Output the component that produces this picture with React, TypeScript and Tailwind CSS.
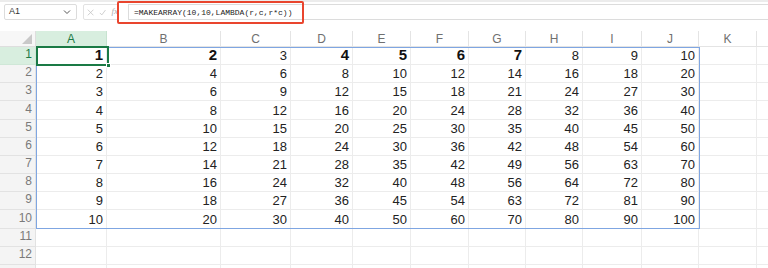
import React from "react";

const cols = [
  { name: "A", w: 71 },
  { name: "B", w: 114 },
  { name: "C", w: 70 },
  { name: "D", w: 62 },
  { name: "E", w: 58 },
  { name: "F", w: 58 },
  { name: "G", w: 57 },
  { name: "H", w: 57 },
  { name: "I", w: 59 },
  { name: "J", w: 57 },
  { name: "K", w: 58 },
  { name: "", w: 60 },
];

const boldFirstRow = [1, 2, 4, 5, 6, 7];
const rowH = 18.17;

export default function App() {
  const rows = Array.from({ length: 13 }, (_, i) => i + 1);

  return (
    <div className="relative w-[768px] h-[268px] overflow-hidden bg-white font-['Liberation_Sans',Arial,sans-serif] text-[#222]">
      {/* formula toolbar */}
      <div className="relative h-[31px] border-t-2 border-[#ececec]">
        <div className="flex items-start pt-[2px] pl-[4px]">
          <div className="flex h-[16px] w-[73px] items-center justify-between rounded-[2px] border border-[#dcdcdc] px-[4px] text-[9px] text-[#333]">
            <span>A1</span>
            <svg width="8" height="6" viewBox="0 0 8 6" className="mr-[1px]">
              <path d="M1 1.5 L4 4.5 L7 1.5" fill="none" stroke="#555" strokeWidth="1" />
            </svg>
          </div>
          <div className="ml-[6px] flex h-[16px] w-[36px] items-center gap-[5px] rounded-[2px] border border-[#e2e2e2] pl-[3px] text-[10px] text-[#bdbdbd]">
            <svg width="9" height="9" viewBox="0 0 9 9">
              <path d="M1 1 L8 8 M8 1 L1 8" stroke="#c4c4c4" strokeWidth="1" />
            </svg>
            <svg width="9" height="9" viewBox="0 0 9 9">
              <path d="M1 5 L3.5 7.5 L8 1.5" fill="none" stroke="#c4c4c4" strokeWidth="1" />
            </svg>
            <span className="italic font-['Liberation_Serif',serif] text-[9px] text-[#aaa]">fx</span>
          </div>
          <div className="ml-[9px] flex h-[16px] flex-1 items-center border-y border-l border-[#dcdcdc] pl-[5px] pt-[1px] font-['Liberation_Mono',monospace] text-[8px] text-[#222]">
            =MAKEARRAY(10,10,LAMBDA(r,c,r*c))
          </div>
        </div>
        <div className="absolute left-[117px] top-[-1px] h-[23px] w-[187px] rounded-[2px] border-2 border-[#e9452e]" />
      </div>

      {/* grid */}
      <div className="relative">
        <div className="flex h-[16px]">
          <div className="relative w-[36px] shrink-0 border-b border-r border-[#dedede] bg-[#f7f7f7]">
            <svg width="10" height="10" viewBox="0 0 10 10" className="absolute right-[3px] bottom-[2px]">
              <path d="M10 0 L10 10 L0 10 Z" fill="#c9c9c9" />
            </svg>
          </div>
          {cols.map((c, i) => (
            <div
              key={i}
              style={{ width: c.w }}
              className={
                i === 0
                  ? "flex shrink-0 items-center justify-center border-b border-r border-[#c7e3d0] bg-[#d8eedf] text-[12px] text-[#1c7a45]"
                  : "flex shrink-0 items-center justify-center border-b border-r border-[#e4e4e4] bg-white text-[12px] text-[#707070]"
              }
            >
              {c.name}
            </div>
          ))}
        </div>

        {rows.map((r) => (
          <div key={r} className="flex" style={{ height: rowH }}>
            <div
              className={
                r === 1
                  ? "flex w-[36px] shrink-0 items-end justify-end border-b border-r border-[#cfe7d7] bg-[#d8eedf] pb-[1px] pr-[3px] text-[12px] text-[#1c7a45]"
                  : "flex w-[36px] shrink-0 items-end justify-end border-b border-r border-[#e2e2e2] bg-[#f4f4f4] pb-[1px] pr-[3px] text-[12px] text-[#7a7a7a]"
              }
            >
              {r <= 12 ? r : ""}
            </div>
            {cols.map((c, ci) => {
              const col = ci + 1;
              const hasVal = r <= 10 && col <= 10;
              const bold = r === 1 && boldFirstRow.includes(col);
              return (
                <div
                  key={ci}
                  style={{ width: c.w }}
                  className="flex shrink-0 items-end justify-end border-b border-r border-[#ececec] pb-[1px] pr-[3px]"
                >
                  {hasVal && (
                    <span className={bold ? "text-[15px] font-bold leading-[17px] text-[#111]" : "text-[13px] leading-[15px] text-[#222]"}>
                      {r * col}
                    </span>
                  )}
                </div>
              );
            })}
          </div>
        ))}

        {/* spill range */}
        <div className="pointer-events-none absolute left-[36px] top-[16px] h-[182px] w-[664px] border border-[#7fa6e2]" />
        {/* active cell */}
        <div className="pointer-events-none absolute left-[36px] top-[15px] h-[20px] w-[73px] border-2 border-[#1a7a45]">
          <div className="absolute right-[-4px] bottom-[-4px] h-[5px] w-[5px] border border-white bg-[#1a7a45]" />
        </div>
      </div>
    </div>
  );
}
